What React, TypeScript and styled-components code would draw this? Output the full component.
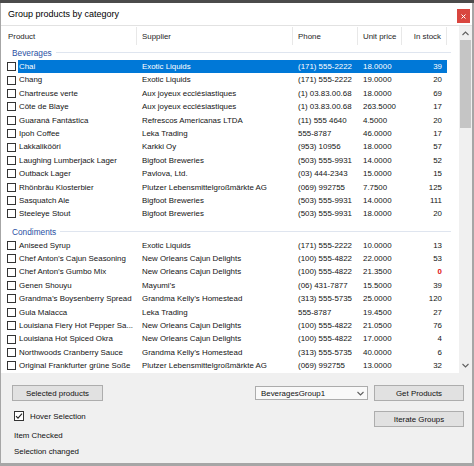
import React from 'react';
import styled, { createGlobalStyle } from 'styled-components';

const Global = createGlobalStyle`
  html, body { margin: 0; padding: 0; background: #ffffff; }
  body { font-family: "Liberation Sans", Arial, sans-serif; }
  * { box-sizing: border-box; }
`;

const ROW_H = 13.4;
const FONT = '7.9px';

type Product = { name: string; supplier: string; phone: string; price: string; stock: number };
type Group = { title: string; items: Product[] };

const groups: Group[] = [
  {
    title: 'Beverages',
    items: [
      { name: 'Chai', supplier: 'Exotic Liquids', phone: '(171) 555-2222', price: '18.0000', stock: 39 },
      { name: 'Chang', supplier: 'Exotic Liquids', phone: '(171) 555-2222', price: '19.0000', stock: 20 },
      { name: 'Chartreuse verte', supplier: 'Aux joyeux ecclésiastiques', phone: '(1) 03.83.00.68', price: '18.0000', stock: 69 },
      { name: 'Côte de Blaye', supplier: 'Aux joyeux ecclésiastiques', phone: '(1) 03.83.00.68', price: '263.5000', stock: 17 },
      { name: 'Guaraná Fantástica', supplier: 'Refrescos Americanas LTDA', phone: '(11) 555 4640', price: '4.5000', stock: 20 },
      { name: 'Ipoh Coffee', supplier: 'Leka Trading', phone: '555-8787', price: '46.0000', stock: 17 },
      { name: 'Lakkalikööri', supplier: 'Karkki Oy', phone: '(953) 10956', price: '18.0000', stock: 57 },
      { name: 'Laughing Lumberjack Lager', supplier: 'Bigfoot Breweries', phone: '(503) 555-9931', price: '14.0000', stock: 52 },
      { name: 'Outback Lager', supplier: 'Pavlova, Ltd.', phone: '(03) 444-2343', price: '15.0000', stock: 15 },
      { name: 'Rhönbräu Klosterbier', supplier: 'Plutzer Lebensmittelgroßmärkte AG', phone: '(069) 992755', price: '7.7500', stock: 125 },
      { name: 'Sasquatch Ale', supplier: 'Bigfoot Breweries', phone: '(503) 555-9931', price: '14.0000', stock: 111 },
      { name: 'Steeleye Stout', supplier: 'Bigfoot Breweries', phone: '(503) 555-9931', price: '18.0000', stock: 20 },
    ],
  },
  {
    title: 'Condiments',
    items: [
      { name: 'Aniseed Syrup', supplier: 'Exotic Liquids', phone: '(171) 555-2222', price: '10.0000', stock: 13 },
      { name: 'Chef Anton’s Cajun Seasoning', supplier: 'New Orleans Cajun Delights', phone: '(100) 555-4822', price: '22.0000', stock: 53 },
      { name: 'Chef Anton’s Gumbo Mix', supplier: 'New Orleans Cajun Delights', phone: '(100) 555-4822', price: '21.3500', stock: 0 },
      { name: 'Genen Shouyu', supplier: 'Mayumi’s', phone: '(06) 431-7877', price: '15.5000', stock: 39 },
      { name: 'Grandma’s Boysenberry Spread', supplier: 'Grandma Kelly’s Homestead', phone: '(313) 555-5735', price: '25.0000', stock: 120 },
      { name: 'Gula Malacca', supplier: 'Leka Trading', phone: '555-8787', price: '19.4500', stock: 27 },
      { name: 'Louisiana Fiery Hot Pepper Sa...', supplier: 'New Orleans Cajun Delights', phone: '(100) 555-4822', price: '21.0500', stock: 76 },
      { name: 'Louisiana Hot Spiced Okra', supplier: 'New Orleans Cajun Delights', phone: '(100) 555-4822', price: '17.0000', stock: 4 },
      { name: 'Northwoods Cranberry Sauce', supplier: 'Grandma Kelly’s Homestead', phone: '(313) 555-5735', price: '40.0000', stock: 6 },
      { name: 'Original Frankfurter grüne Soße', supplier: 'Plutzer Lebensmittelgroßmärkte AG', phone: '(069) 992755', price: '13.0000', stock: 32 },
    ],
  },
];

const Window = styled.div`
  width: 474px;
  height: 466px;
  display: flex;
  flex-direction: column;
  overflow: hidden;
  background: #f0f0f0;
`;

const Desktop = styled.div`
  height: 3px;
  flex: none;
  background: #4b4b4b;
`;

const Frame = styled.div`
  flex: 1;
  min-height: 0;
  display: flex;
  flex-direction: column;
  border-left: 1px solid #a6a6a6;
  border-right: 2px solid #a6a6a6;
  border-bottom: 3px solid #a6a6a6;
`;

const TitleBar = styled.div`
  height: 23px;
  flex: none;
  display: flex;
  align-items: flex-start;
  background: #ffffff;
  border-bottom: 1px solid #e2e2e2;
`;

const Title = styled.span`
  font-size: 9px;
  color: #000000;
  line-height: 22px;
  padding-left: 7px;
`;

const CloseButton = styled.div`
  margin-left: auto;
  margin-right: 2px;
  margin-top: 6px;
  width: 13px;
  height: 14px;
  background: #d9463f;
  display: flex;
  align-items: center;
  justify-content: center;
`;

const ListArea = styled.div`
  height: 347px;
  flex: none;
  display: flex;
  background: #ffffff;
`;

const ListView = styled.div`
  flex: 1;
  overflow: hidden;
  display: flex;
  flex-direction: column;
`;

const Header = styled.div`
  height: 20px;
  flex: none;
  display: flex;
  align-items: stretch;
  padding-top: 1px;
  padding-bottom: 1px;
`;

const HeaderCell = styled.div<{ $w: number; $pl?: number; $right?: boolean }>`
  width: ${(p) => p.$w}px;
  flex: none;
  font-size: ${FONT};
  color: #1e1e1e;
  display: flex;
  align-items: center;
  justify-content: ${(p) => (p.$right ? 'flex-end' : 'flex-start')};
  padding-left: ${(p) => (p.$right ? 0 : p.$pl ?? 5)}px;
  padding-right: ${(p) => (p.$right ? 5 : 0)}px;
  border-right: 1px solid #e8e8e8;
  white-space: nowrap;
`;

const GroupHeader = styled.div<{ $first?: boolean }>`
  height: 14px;
  flex: none;
  margin-top: ${(p) => (p.$first ? 0 : 4)}px;
  display: flex;
  align-items: center;
  padding-left: 11px;
  padding-right: 8px;
`;

const GroupLabel = styled.span`
  font-size: 8.3px;
  color: #2b4fa3;
`;

const GroupLine = styled.div`
  flex: 1;
  height: 1px;
  margin-left: 4px;
  margin-top: -1px;
  background: #dfe5ef;
`;

const Row = styled.div`
  height: ${ROW_H}px;
  flex: none;
  display: flex;
  align-items: stretch;
`;

const CheckCell = styled.div`
  width: 17px;
  flex: none;
  display: flex;
  align-items: center;
  padding-left: 6px;
`;

const Box = styled.div<{ $size?: number }>`
  width: ${(p) => p.$size ?? 9}px;
  height: ${(p) => p.$size ?? 9}px;
  border: 1px solid #333333;
  background: #ffffff;
  display: flex;
  align-items: center;
  justify-content: center;
  flex: none;
`;

const Highlight = styled.div<{ $selected?: boolean }>`
  width: 429px;
  flex: none;
  display: flex;
  background: ${(p) => (p.$selected ? '#0078d7' : 'transparent')};
  color: ${(p) => (p.$selected ? '#ffffff' : '#141414')};
`;

const Cell = styled.div<{ $w: number; $pl?: number; $right?: boolean; $alert?: boolean }>`
  width: ${(p) => p.$w}px;
  flex: none;
  font-size: ${FONT};
  line-height: ${ROW_H}px;
  white-space: nowrap;
  overflow: hidden;
  text-align: ${(p) => (p.$right ? 'right' : 'left')};
  padding-left: ${(p) => (p.$right ? 0 : p.$pl ?? 5)}px;
  padding-right: ${(p) => (p.$right ? 5 : 0)}px;
  color: ${(p) => (p.$alert ? '#e01010' : 'inherit')};
  font-weight: ${(p) => (p.$alert ? 700 : 400)};
`;

const ScrollBar = styled.div`
  width: 13px;
  flex: none;
  display: flex;
  flex-direction: column;
  background: #f0f0f0;
`;

const ScrollArrow = styled.div<{ $h: number }>`
  height: ${(p) => p.$h}px;
  flex: none;
  display: flex;
  align-items: center;
  justify-content: center;
`;

const ScrollTrack = styled.div`
  flex: 1;
  display: flex;
  flex-direction: column;
`;

const Thumb = styled.div`
  height: 88px;
  margin: 0 1px;
  background: #c5c5c5;
`;

const BottomPanel = styled.div`
  flex: 1;
  display: flex;
  padding: 12px 8px 0 11px;
  background: #f0f0f0;
`;

const LeftCol = styled.div`
  display: flex;
  flex-direction: column;
  align-items: flex-start;
`;

const Button = styled.div<{ $w?: number; $h?: number }>`
  width: ${(p) => p.$w ?? 90}px;
  height: ${(p) => p.$h ?? 16}px;
  background: #e1e1e1;
  border: 1px solid #adadad;
  display: flex;
  align-items: center;
  justify-content: center;
  font-size: ${FONT};
  color: #111111;
  white-space: nowrap;
`;

const CheckRow = styled.div`
  display: flex;
  align-items: center;
  gap: 6px;
  margin-top: 10px;
  margin-left: 2px;
  font-size: ${FONT};
  color: #111111;
`;

const StatusText = styled.div<{ $mt: number }>`
  margin-top: ${(p) => p.$mt}px;
  margin-left: 2px;
  font-size: ${FONT};
  color: #111111;
  line-height: 12px;
`;

const RightGrid = styled.div`
  margin-left: auto;
  display: grid;
  grid-template-columns: 113px 90px;
  column-gap: 6px;
  row-gap: 10px;
  align-items: center;
  align-content: start;
`;

const Combo = styled.div`
  height: 14px;
  background: #f9f9f9;
  border: 1px solid #acacac;
  display: flex;
  align-items: center;
  padding-left: 5px;
  padding-right: 3px;
  font-size: ${FONT};
  color: #111111;
`;

const ComboText = styled.span`
  flex: 1;
`;

const GridSpacer = styled.div``;

const cols = {
  product: 119,
  supplier: 156,
  phone: 65,
  price: 44,
  stock: 45,
};

const Chevron = ({ up }: { up?: boolean }) => (
  <svg width="7" height="5" viewBox="0 0 7 5">
    <polyline
      points={up ? '0.5,4 3.5,1 6.5,4' : '0.5,1 3.5,4 6.5,1'}
      fill="none"
      stroke="#606060"
      strokeWidth="1.1"
    />
  </svg>
);

export default function App() {
  return (
    <>
      <Global />
      <Window>
        <Desktop />
        <Frame>
          <TitleBar>
            <Title>Group products by category</Title>
            <CloseButton>
              <svg width="5" height="5" viewBox="0 0 5 5">
                <path d="M0.5 0.5 L4.5 4.5 M4.5 0.5 L0.5 4.5" stroke="#ffffff" strokeWidth="1" />
              </svg>
            </CloseButton>
          </TitleBar>
          <ListArea>
            <ListView>
              <Header>
                <HeaderCell $w={17 + cols.product} $pl={7}>Product</HeaderCell>
                <HeaderCell $w={cols.supplier}>Supplier</HeaderCell>
                <HeaderCell $w={cols.phone}>Phone</HeaderCell>
                <HeaderCell $w={cols.price}>Unit price</HeaderCell>
                <HeaderCell $w={cols.stock} $right>In stock</HeaderCell>
              </Header>
              {groups.map((g, gi) => (
                <React.Fragment key={g.title}>
                  <GroupHeader $first={gi === 0}>
                    <GroupLabel>{g.title}</GroupLabel>
                    <GroupLine />
                  </GroupHeader>
                  {g.items.map((it, ii) => (
                    <Row key={it.name}>
                      <CheckCell>
                        <Box />
                      </CheckCell>
                      <Highlight $selected={gi === 0 && ii === 0}>
                        <Cell $w={cols.product} $pl={1}>{it.name}</Cell>
                        <Cell $w={cols.supplier}>{it.supplier}</Cell>
                        <Cell $w={cols.phone}>{it.phone}</Cell>
                        <Cell $w={cols.price}>{it.price}</Cell>
                        <Cell $w={cols.stock} $right $alert={it.stock === 0}>{it.stock}</Cell>
                      </Highlight>
                    </Row>
                  ))}
                </React.Fragment>
              ))}
            </ListView>
            <ScrollBar>
              <ScrollArrow $h={14}>
                <Chevron up />
              </ScrollArrow>
              <ScrollTrack>
                <Thumb />
              </ScrollTrack>
              <ScrollArrow $h={15}>
                <Chevron />
              </ScrollArrow>
            </ScrollBar>
          </ListArea>
          <BottomPanel>
            <LeftCol>
              <Button $w={91} $h={16}>Selected products</Button>
              <CheckRow>
                <Box $size={10}>
                  <svg width="8" height="8" viewBox="0 0 8 8">
                    <polyline points="1,4.2 3,6.2 7,1.6" fill="none" stroke="#222" strokeWidth="1.1" />
                  </svg>
                </Box>
                Hover Selection
              </CheckRow>
              <StatusText $mt={9}>Item Checked</StatusText>
              <StatusText $mt={4}>Selection changed</StatusText>
            </LeftCol>
            <RightGrid>
              <Combo>
                <ComboText>BeveragesGroup1</ComboText>
                <Chevron />
              </Combo>
              <Button $w={90} $h={16}>Get Products</Button>
              <GridSpacer />
              <Button $w={90} $h={16}>Iterate Groups</Button>
            </RightGrid>
          </BottomPanel>
        </Frame>
      </Window>
    </>
  );
}
